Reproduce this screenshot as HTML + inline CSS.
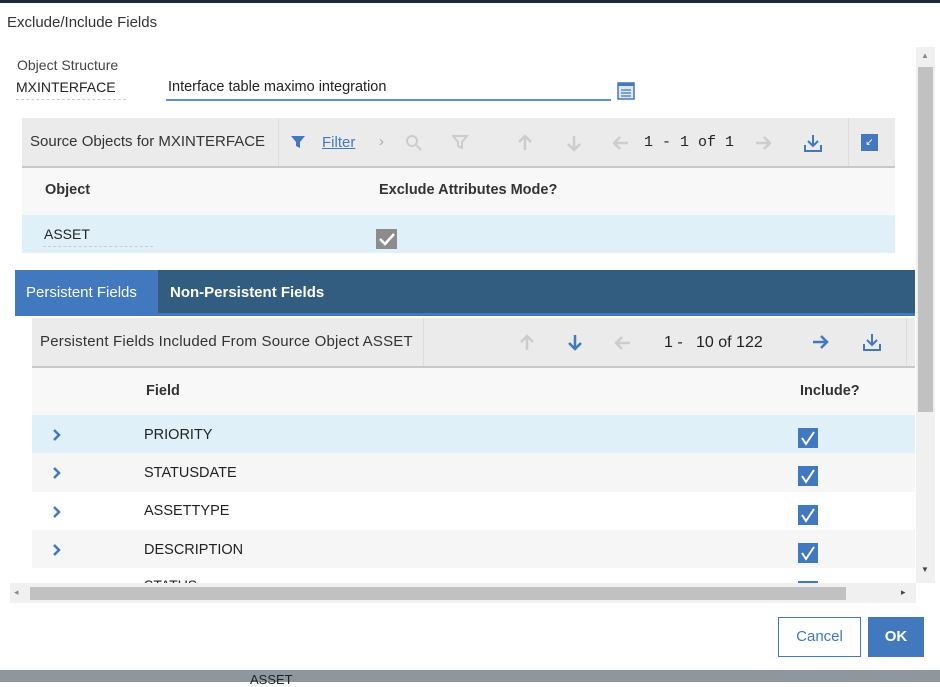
<!DOCTYPE html>
<html><head><meta charset="utf-8"><style>
*{margin:0;padding:0;box-sizing:border-box}
body{width:940px;height:682px;background:#fff;font-family:"Liberation Sans",sans-serif;color:#222;position:relative;overflow:hidden;font-size:14px}
.a{position:absolute}
.t{position:absolute;white-space:nowrap}
</style></head><body>
<svg width="0" height="0" style="position:absolute"><defs>
<path id="up" d="M10 17V3M4 9l6-6 6 6" fill="none" stroke-width="2.5"/>
<path id="dn" d="M10 3v14M4 11l6 6 6-6" fill="none" stroke-width="2.5"/>
<path id="lf" d="M17 10H3M9 4l-6 6 6 6" fill="none" stroke-width="2.5"/>
<path id="rt" d="M3 10h14M11 4l6 6-6 6" fill="none" stroke-width="2.5"/>
</defs></svg>
<div class="a" style="left:0;top:0;width:940px;height:3px;background:#1d2b36"></div>
<div class="t" style="left:7px;top:14px;font-size:15px;color:#333">Exclude/Include Fields</div>
<div class="t" style="left:17px;top:57px;font-size:14px;color:#444">Object Structure</div>
<div class="t" style="left:16px;top:79px;font-size:14px;color:#222">MXINTERFACE</div>
<div class="a" style="left:16px;top:99px;width:110px;border-top:1px dashed #ccc"></div>
<div class="t" style="left:168px;top:79px;font-size:14.5px;color:#222">Interface table maximo integration</div>
<div class="a" style="left:166px;top:99px;width:445px;height:2px;background:#5b8fd0"></div>
<svg class="a" style="left:617px;top:82px" width="18" height="18" viewBox="0 0 18 18"><rect x="1" y="1" width="16" height="16" fill="#dde8f5" stroke="#4178be" stroke-width="1.5"/><rect x="1" y="1" width="16" height="3" fill="#4178be"/><path d="M4 8h10M4 11h10M4 14h10" stroke="#4178be" stroke-width="1.2"/></svg>
<div class="a" style="left:916px;top:47px;width:19px;height:536px;background:#f0f0f0"></div>
<div class="a" style="left:918px;top:67px;width:15px;height:345px;background:#c1c1c1"></div>
<div class="t" style="left:921px;top:51px;font-size:8px;color:#888">▲</div>
<div class="t" style="left:921px;top:565px;font-size:8px;color:#444">▼</div>
<div class="a" style="left:22px;top:118px;width:873px;height:50px;background:#ebebeb;border-bottom:2px solid #c8c8c8"></div>
<div class="t" style="left:30px;top:133px;font-size:15px;color:#333">Source Objects for MXINTERFACE</div>
<div class="a" style="left:278px;top:118px;width:1px;height:48px;background:#ddd"></div>
<svg class="a" style="left:290px;top:134px" width="16" height="16"><path d="M1 2h14l-5 6v6l-4-2V8z" fill="#4178be"/></svg>
<div class="t" style="left:322px;top:134px;font-size:15px;color:#4178be;text-decoration:underline">Filter</div>
<div class="t" style="left:379px;top:133px;font-size:15px;color:#aaa">›</div>
<svg class="a" style="left:405px;top:134px" width="18" height="18"><circle cx="7" cy="7" r="5" fill="none" stroke="#ccc" stroke-width="2"/><path d="M11 11l5 5" stroke="#ccc" stroke-width="2"/></svg>
<svg class="a" style="left:452px;top:134px" width="18" height="18"><path d="M1 2h14l-5 6v6l-4-2V8z" fill="none" stroke="#ccc" stroke-width="2"/></svg>
<svg class="a" style="left:515px;top:133px" width="20" height="20" stroke="#ccc"><use href="#up"/></svg>
<svg class="a" style="left:564px;top:133px" width="20" height="20" stroke="#ccc"><use href="#dn"/></svg>
<svg class="a" style="left:611px;top:133px" width="20" height="20" stroke="#ccc"><use href="#lf"/></svg>
<div class="t" style="left:644px;top:134px;font-size:15px;font-family:'Liberation Mono',monospace;color:#222">1 - 1 of 1</div>
<svg class="a" style="left:753px;top:133px" width="20" height="20" stroke="#ccc"><use href="#rt"/></svg>
<svg class="a" style="left:803px;top:133px" width="20" height="20"><path d="M10 2v11M5 8l5 5 5-5M2 12v6h16v-6" fill="none" stroke="#4178be" stroke-width="2"/></svg>
<div class="a" style="left:848px;top:118px;width:1px;height:48px;background:#ddd"></div>
<div class="a" style="left:861px;top:134px;width:17px;height:17px;background:#4178be;color:#fff;font-size:10px;text-align:center;line-height:17px">↙</div>
<div class="a" style="left:22px;top:168px;width:873px;height:47px;background:#f8f8f8"></div>
<div class="t" style="left:45px;top:182px;font-size:14.5px;font-weight:bold;color:#333">Object</div>
<div class="t" style="left:379px;top:182px;font-size:14.5px;font-weight:bold;color:#333">Exclude Attributes Mode?</div>
<div class="a" style="left:22px;top:215px;width:873px;height:38px;background:#dff0f8"></div>
<div class="t" style="left:44px;top:226px;font-size:14px;color:#222">ASSET</div>
<div class="a" style="left:43px;top:246px;width:110px;border-top:1px dashed #ccc"></div>
<div class="a" style="left:376px;top:229px;width:21px;height:20px;background:#8c8c8c"></div>
<svg class="a" style="left:376px;top:229px" width="21" height="20"><path d="M4 10l5 5 9-10" fill="none" stroke="#fff" stroke-width="2.5"/></svg>
<div class="a" style="left:15px;top:270px;width:900px;height:46px;background:#325c80"></div>
<div class="a" style="left:15px;top:270px;width:143px;height:46px;background:#4178be"></div>
<div class="a" style="left:15px;top:313px;width:900px;height:3px;background:#4178be"></div>
<div class="t" style="left:26px;top:284px;font-size:15px;color:#fff">Persistent Fields</div>
<div class="t" style="left:170px;top:284px;font-size:15px;font-weight:bold;color:#fff">Non-Persistent Fields</div>
<div class="a" style="left:32px;top:318px;width:883px;height:50px;background:#ebebeb;border-bottom:2px solid #c8c8c8"></div>
<div class="t" style="left:40px;top:333px;font-size:15px;color:#333;letter-spacing:0.2px">Persistent Fields Included From Source Object ASSET</div>
<div class="a" style="left:423px;top:318px;width:1px;height:48px;background:#ddd"></div>
<svg class="a" style="left:517px;top:333px" width="20" height="20" stroke="#ccc"><use href="#up"/></svg>
<svg class="a" style="left:565px;top:332px" width="20" height="20" stroke="#4178be"><use href="#dn"/></svg>
<svg class="a" style="left:613px;top:333px" width="20" height="20" stroke="#ccc"><use href="#lf"/></svg>
<div class="t" style="left:664px;top:334px;font-size:16px;color:#222">1 -&nbsp;&nbsp; 10 of 122</div>
<svg class="a" style="left:810px;top:332px" width="20" height="20" stroke="#4178be"><use href="#rt"/></svg>
<svg class="a" style="left:862px;top:332px" width="20" height="20"><path d="M10 2v11M5 8l5 5 5-5M2 12v6h16v-6" fill="none" stroke="#4178be" stroke-width="2"/></svg>
<div class="a" style="left:906px;top:318px;width:1px;height:48px;background:#ddd"></div>
<div class="a" style="left:32px;top:368px;width:883px;height:47px;background:#f8f8f8"></div>
<div class="t" style="left:146px;top:383px;font-size:14.5px;font-weight:bold;color:#333">Field</div>
<div class="t" style="left:800px;top:383px;font-size:14.5px;font-weight:bold;color:#333">Include?</div>
<div class="a" style="left:32px;top:415px;width:883px;height:38px;background:#dff0f8"></div>
<div class="a" style="left:32px;top:453px;width:883px;height:39px;background:#f6f6f6"></div>
<div class="a" style="left:32px;top:492px;width:883px;height:38px;background:#fff"></div>
<div class="a" style="left:32px;top:530px;width:883px;height:38px;background:#f6f6f6"></div>
<svg class="a" style="left:50px;top:428px" width="14" height="135" fill="none" stroke="#4178be" stroke-width="2.5"><path d="M4 2l5 5-5 5"/><path d="M4 40l5 5-5 5"/><path d="M4 79l5 5-5 5"/><path d="M4 117l5 5-5 5"/></svg>
<div class="t" style="left:144px;top:427px;font-size:14.5px;color:#222">PRIORITY</div>
<div class="t" style="left:144px;top:465px;font-size:14.5px;color:#222">STATUSDATE</div>
<div class="t" style="left:144px;top:503px;font-size:14.5px;color:#222">ASSETTYPE</div>
<div class="t" style="left:144px;top:542px;font-size:14.5px;color:#222">DESCRIPTION</div>
<div class="a" style="left:32px;top:568px;width:883px;height:15px;background:#fff;overflow:hidden"><div class="t" style="left:112px;top:9px;font-size:14px;color:#222">STATUS</div></div>
<svg class="a" style="left:798px;top:428px" width="21" height="145">
<g fill="#4178be"><rect x="0" y="0" width="20" height="20"/><rect x="0" y="38" width="20" height="20"/><rect x="0" y="77" width="20" height="20"/><rect x="0" y="115" width="20" height="20"/></g>
<g fill="none" stroke="#fff" stroke-width="2"><path d="M4 10l4 6 8-12"/><path d="M4 48l4 6 8-12"/><path d="M4 87l4 6 8-12"/><path d="M4 125l4 6 8-12"/></g></svg>
<div class="a" style="left:798px;top:581px;width:20px;height:2px;background:#4178be"></div>
<div class="a" style="left:10px;top:583px;width:906px;height:20px;background:#f0f0f0"></div>
<div class="a" style="left:30px;top:587px;width:816px;height:13px;background:#c1c1c1"></div>
<div class="t" style="left:14px;top:587px;font-size:9px;color:#888">◂</div>
<div class="t" style="left:901px;top:587px;font-size:9px;color:#444">▸</div>
<div class="a" style="left:778px;top:617px;width:83px;height:40px;border:1px solid #4178be;color:#4178be;font-size:15px;text-align:center;line-height:38px">Cancel</div>
<div class="a" style="left:868px;top:617px;width:56px;height:40px;background:#4178be;color:#fff;font-size:15px;font-weight:bold;text-align:center;line-height:40px">OK</div>
<div class="a" style="left:0;top:670px;width:940px;height:12px;background:#8e979e"></div>
<div class="t" style="left:250px;top:672px;font-size:13px;color:#222">ASSET</div>
</body></html>
